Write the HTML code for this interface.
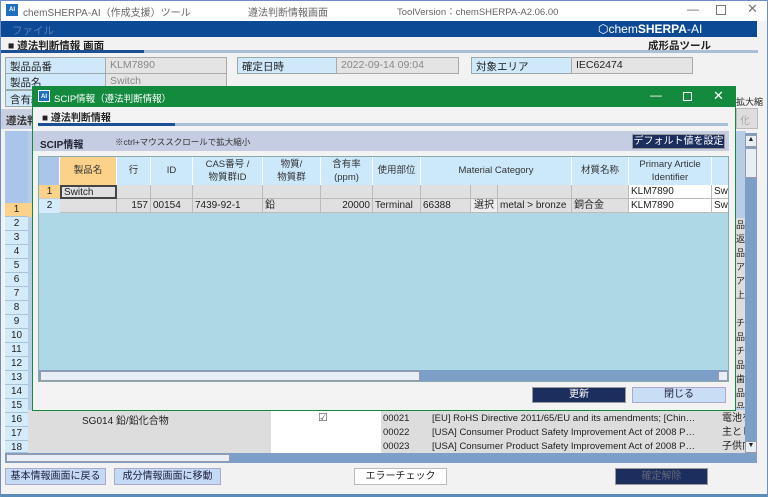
<!DOCTYPE html>
<html><head><meta charset="utf-8"><style>
*{margin:0;padding:0;box-sizing:border-box}
body{width:768px;height:497px;overflow:hidden;background:#f2f2f2;font-family:"Liberation Sans","Noto Sans CJK JP",sans-serif;font-size:10px;color:#222;position:relative}
.a{position:absolute}
.lb{background:#cfe9fb;border:1px solid #9aa;padding:1px 4px;font-size:10.5px}
.vl{background:#e4e4e4;border:1px solid #aaa;padding:1px 4px;color:#888;font-size:10.5px}
.rh{position:absolute;left:5px;width:23px;height:14px;background:#d3ebfb;border-bottom:1px solid #a9c4d8;text-align:center;font-size:10px;line-height:14px}
.hc{position:absolute;top:0;height:28px;border-right:1px solid #fff;text-align:center;font-size:9.5px;line-height:13px;padding-top:1px;color:#333}
.c{position:absolute;height:14px;border-right:1px solid #bbb;border-bottom:1px solid #bbb;font-size:10px;line-height:13px;padding:0 2px;white-space:nowrap;overflow:hidden}
</style></head><body>
<div class="a" style="left:0;top:0;width:768px;height:21px;background:#fff;border:1px solid #6a8fc0;border-bottom:none"></div>
<div class="a" style="left:6px;top:4px;width:12px;height:12px;background:#1e6fc0;color:#fff;font-size:6px;font-weight:bold;text-align:center;line-height:12px">AI</div>
<div class="a" style="left:23px;top:4px;font-size:10px;color:#666">chemSHERPA-AI（作成支援）ツール</div>
<div class="a" style="left:248px;top:4px;font-size:10px;color:#666">遵法判断情報画面</div>
<div class="a" style="left:397px;top:4px;font-size:9.5px;color:#666">ToolVersion：chemSHERPA-A2.06.00</div>
<div class="a" style="left:687px;top:2px;font-size:12px;color:#666">—</div>
<div class="a" style="left:716px;top:5px;width:10px;height:10px;border:1px solid #777"></div>
<div class="a" style="left:747px;top:1px;font-size:13px;color:#777">✕</div>
<div class="a" style="left:1px;top:21px;width:756px;height:16px;background:#0c4a96"></div>
<div class="a" style="left:12px;top:23px;font-size:10.5px;color:#5a7fb8">ファイル</div>
<div class="a" style="left:598px;top:22px;font-size:12px;color:#fff">⬡chem<b>SHERPA</b>-AI</div>
<div class="a" style="left:648px;top:38px;font-size:10.5px;font-weight:bold">成形品ツール</div>
<div class="a" style="left:8px;top:38px;font-size:10.5px;font-weight:bold">■ 遵法判断情報 画面</div>
<div class="a" style="left:1px;top:50px;width:143px;height:3px;background:#1d4f95"></div>
<div class="a" style="left:144px;top:50px;width:614px;height:3px;background:#a8bfd8"></div>
<div class="a lb" style="left:5px;top:57px;width:101px;height:17px">製品品番</div>
<div class="a vl" style="left:105px;top:57px;width:122px;height:17px">KLM7890</div>
<div class="a lb" style="left:5px;top:73px;width:101px;height:17px">製品名</div>
<div class="a vl" style="left:105px;top:73px;width:122px;height:17px">Switch</div>
<div class="a lb" style="left:5px;top:90px;width:101px;height:17px">含有総</div>
<div class="a lb" style="left:237px;top:57px;width:100px;height:17px">確定日時</div>
<div class="a vl" style="left:336px;top:57px;width:123px;height:17px">2022-09-14 09:04</div>
<div class="a lb" style="left:471px;top:57px;width:101px;height:17px">対象エリア</div>
<div class="a vl" style="left:571px;top:57px;width:122px;height:17px;color:#222">IEC62474</div>
<div class="a" style="left:736px;top:95px;font-size:9px">拡大縮小</div>
<div class="a" style="left:736px;top:108px;width:22px;height:21px;background:#ddd;border:1px solid #bbb;color:#aaa;font-size:10px;padding:3px">化</div>
<div class="a" style="left:1px;top:109px;width:735px;height:20px;background:#c8cfe0"></div>
<div class="a" style="left:6px;top:113px;font-size:10.5px;font-weight:bold;color:#333">遵法判</div>
<div class="a" style="left:5px;top:131px;width:741px;height:322px;background:#b7cde6"></div>
<div class="a" style="left:5px;top:131px;width:23px;height:72px;background:#a9c6ea"></div>
<div class="a" style="left:28px;top:203px;width:4px;height:14px;background:#fcd28a"></div>
<div class="rh" style="top:203px;background:#fcd28a">1</div>
<div class="rh" style="top:217px">2</div><div class="rh" style="top:231px">3</div><div class="rh" style="top:245px">4</div><div class="rh" style="top:259px">5</div><div class="rh" style="top:273px">6</div><div class="rh" style="top:287px">7</div><div class="rh" style="top:301px">8</div><div class="rh" style="top:315px">9</div><div class="rh" style="top:329px">10</div><div class="rh" style="top:343px">11</div><div class="rh" style="top:357px">12</div><div class="rh" style="top:371px">13</div><div class="rh" style="top:385px">14</div><div class="rh" style="top:399px">15</div><div class="rh" style="top:413px">16</div><div class="rh" style="top:427px">17</div><div class="rh" style="top:441px;height:12px">18</div>
<div class="a" style="left:28px;top:410px;width:243px;height:43px;background:#ddd"></div>
<div class="a" style="left:82px;top:412px;font-size:10px">SG014 鉛/鉛化合物</div>
<div class="a" style="left:271px;top:410px;width:110px;height:43px;background:#fff"></div>
<div class="a" style="left:318px;top:411px;font-size:11px;color:#555">☑</div>
<div class="a" style="left:381px;top:410px;width:364px;height:43px;background:#ddd"></div>
<div class="a" style="left:383px;top:412px;line-height:14px;font-size:9.5px">00021<br>00022<br>00023</div>
<div class="a" style="left:432px;top:412px;line-height:14px;font-size:9.5px;white-space:nowrap">[EU] RoHS Directive 2011/65/EU and its amendments; [Chin…<br>[USA] Consumer Product Safety Improvement Act of 2008 P…<br>[USA] Consumer Product Safety Improvement Act of 2008 P…</div>
<div class="a" style="left:722px;top:412px;line-height:14px;font-size:10px;width:23px;overflow:hidden;white-space:nowrap">電池を除<br>主として<br>子供向け</div>
<div class="a" style="left:736px;top:218px;width:9px;height:190px;background:#ddd;font-size:9px;line-height:14px;overflow:hidden">品<br>返<br>品<br>ア<br>ア<br>上<br><br>チ<br>品<br>チ<br>品<br>歯<br>品<br>品</div>
<div class="a" style="left:745px;top:133px;width:12px;height:320px;background:#7c9ec7"></div>
<div class="a" style="left:745px;top:135px;width:12px;height:12px;background:#e8eef6;border:1px solid #99a;font-size:7px;text-align:center">▲</div>
<div class="a" style="left:745px;top:148px;width:12px;height:30px;background:#e8eef6;border:1px solid #99a"></div>
<div class="a" style="left:745px;top:441px;width:12px;height:12px;background:#e8eef6;border:1px solid #99a;font-size:7px;text-align:center">▼</div>
<div class="a" style="left:5px;top:453px;width:752px;height:10px;background:#7c9ec7"></div>
<div class="a" style="left:6px;top:454px;width:224px;height:8px;background:#e8eef6;border:1px solid #99a"></div>
<div class="a" style="left:5px;top:468px;width:101px;height:17px;background:#c3d9f4;border:1px solid #aac;font-size:10px;color:#224;text-align:center;line-height:15px">基本情報画面に戻る</div>
<div class="a" style="left:114px;top:468px;width:107px;height:17px;background:#c3d9f4;border:1px solid #aac;font-size:10px;color:#224;text-align:center;line-height:15px">成分情報画面に移動</div>
<div class="a" style="left:354px;top:468px;width:93px;height:17px;background:#fff;border:1px solid #bbb;font-size:10px;text-align:center;line-height:15px">エラーチェック</div>
<div class="a" style="left:615px;top:468px;width:93px;height:17px;background:#1b2e5e;border:1px solid #999;font-size:10px;color:#667;text-align:center;line-height:15px">確定解除</div>
<div class="a" style="left:0;top:494px;width:768px;height:3px;background:#5a8cb8"></div>
<div class="a" style="left:0;top:21px;width:1px;height:476px;background:#6a8fc0"></div>
<div class="a" style="left:767px;top:21px;width:1px;height:476px;background:#6a8fc0"></div>

<div class="a" style="left:32px;top:86px;width:704px;height:325px;background:#f3f3f3;border:1px solid #138a3e"></div>
<div class="a" style="left:32px;top:86px;width:704px;height:21px;background:#138a3e"></div>
<div class="a" style="left:38px;top:90px;width:12px;height:12px;background:#1e6fc0;color:#fff;font-size:6px;font-weight:bold;text-align:center;line-height:12px;border:1px solid #fff">AI</div>
<div class="a" style="left:54px;top:91px;font-size:9.5px;color:#fff">SCIP情報（遵法判断情報）</div>
<div class="a" style="left:650px;top:88px;font-size:12px;color:#fff">—</div>
<div class="a" style="left:683px;top:92px;width:9px;height:9px;border:1px solid #fff"></div>
<div class="a" style="left:713px;top:88px;font-size:13px;color:#fff">✕</div>
<div class="a" style="left:42px;top:109px;font-size:10px;font-weight:bold">■ 遵法判断情報</div>
<div class="a" style="left:38px;top:123px;width:137px;height:3px;background:#1d4f95"></div>
<div class="a" style="left:175px;top:123px;width:553px;height:3px;background:#a8bfd8"></div>
<div class="a" style="left:33px;top:131px;width:696px;height:20px;background:#c5cde3"></div>
<div class="a" style="left:40px;top:136px;font-size:10px;font-weight:bold;color:#223">SCIP情報</div>
<div class="a" style="left:115px;top:136px;font-size:8.5px;color:#333">※ctrl+マウススクロールで拡大縮小</div>
<div class="a" style="left:632px;top:134px;width:93px;height:15px;background:#1b2e5e;border:1px solid #999;font-size:10px;color:#fff;text-align:center;line-height:13px">デフォルト値を設定</div>
<div class="a" style="left:38px;top:156px;width:691px;height:226px;background:#aed8e6;border:1px solid #8aa;overflow:hidden">
 <div class="a" style="left:0;top:0;width:691px;height:28px;background:#cce8fb"></div>
 <div class="hc" style="left:0;width:21px;background:#a9c6ea"></div>
 <div class="hc" style="left:21px;width:57px;background:#fcd28a;line-height:26px">製品名</div>
 <div class="hc" style="left:78px;width:34px;line-height:26px">行</div>
 <div class="hc" style="left:112px;width:42px;line-height:26px">ID</div>
 <div class="hc" style="left:154px;width:70px">CAS番号 /<br>物質群ID</div>
 <div class="hc" style="left:224px;width:58px">物質/<br>物質群</div>
 <div class="hc" style="left:282px;width:52px">含有率<br>(ppm)</div>
 <div class="hc" style="left:334px;width:48px;line-height:26px">使用部位</div>
 <div class="hc" style="left:382px;width:151px;line-height:26px">Material Category</div>
 <div class="hc" style="left:533px;width:57px;line-height:26px">材質名称</div>
 <div class="hc" style="left:590px;width:83px">Primary Article<br>Identifier</div>
 <div class="a" style="left:0;top:28px;width:21px;height:14px;background:#fcd28a;text-align:center;line-height:14px;border-bottom:1px solid #ccc">1</div>
 <div class="a" style="left:0;top:42px;width:21px;height:14px;background:#d3ebfb;text-align:center;line-height:14px">2</div>
 <div class="a" style="left:21px;top:28px;width:570px;height:28px;background:#e0e0e0"></div>
 <div class="c" style="left:21px;top:28px;width:57px;border:2px solid #444;line-height:11px">Switch</div>
 <div class="c" style="left:78px;top:28px;width:34px"></div><div class="c" style="left:112px;top:28px;width:42px"></div><div class="c" style="left:154px;top:28px;width:70px"></div><div class="c" style="left:224px;top:28px;width:58px"></div><div class="c" style="left:282px;top:28px;width:52px"></div><div class="c" style="left:334px;top:28px;width:48px"></div><div class="c" style="left:382px;top:28px;width:50px"></div><div class="c" style="left:432px;top:28px;width:27px"></div><div class="c" style="left:459px;top:28px;width:74px"></div><div class="c" style="left:533px;top:28px;width:57px"></div>
 <div class="c" style="left:590px;top:28px;width:83px;background:#fff">KLM7890</div>
 <div class="c" style="left:673px;top:28px;width:20px;background:#fff">Swit</div>
 <div class="c" style="left:21px;top:42px;width:57px"></div>
 <div class="c" style="left:78px;top:42px;width:34px;text-align:right">157</div>
 <div class="c" style="left:112px;top:42px;width:42px">00154</div>
 <div class="c" style="left:154px;top:42px;width:70px">7439-92-1</div>
 <div class="c" style="left:224px;top:42px;width:58px">鉛</div>
 <div class="c" style="left:282px;top:42px;width:52px;text-align:right">20000</div>
 <div class="c" style="left:334px;top:42px;width:48px">Terminal</div>
 <div class="c" style="left:382px;top:42px;width:50px">66388</div>
 <div class="c" style="left:432px;top:42px;width:27px;background:#eee;text-align:center">選択</div>
 <div class="c" style="left:459px;top:42px;width:74px">metal &gt; bronze</div>
 <div class="c" style="left:533px;top:42px;width:57px">銅合金</div>
 <div class="c" style="left:590px;top:42px;width:83px;background:#fff">KLM7890</div>
 <div class="c" style="left:673px;top:42px;width:20px;background:#fff">Swit</div>
 <div class="a" style="left:0;top:213px;width:691px;height:12px;background:#7c9ec7"></div>
 <div class="a" style="left:1px;top:214px;width:380px;height:10px;background:#e8eef6;border:1px solid #99a"></div>
 <div class="a" style="left:679px;top:214px;width:10px;height:10px;background:#e8eef6;border:1px solid #99a"></div>
</div>
<div class="a" style="left:532px;top:387px;width:94px;height:16px;background:#1b2e5e;border:1px solid #999;font-size:10px;color:#fff;text-align:center;line-height:14px">更新</div>
<div class="a" style="left:632px;top:387px;width:94px;height:16px;background:#c9ddf5;border:1px solid #aac;font-size:10px;color:#224;text-align:center;line-height:14px">閉じる</div>
</body></html>
